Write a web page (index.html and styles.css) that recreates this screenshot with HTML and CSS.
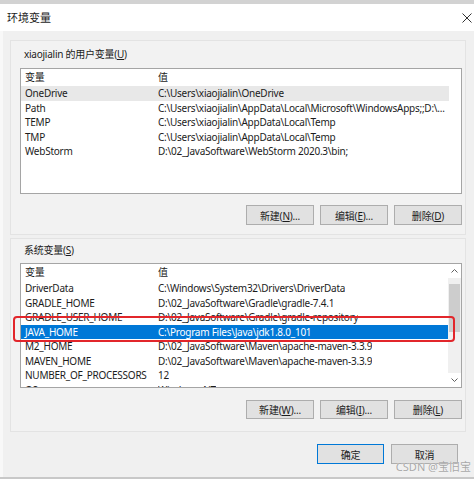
FILE: index.html
```html
<!DOCTYPE html>
<html lang="zh-CN">
<head>
    <meta charset="UTF-8">
    <meta name="viewport" content="width=device-width, initial-scale=1.0">
    <title>环境变量</title>
    <link rel="stylesheet" href="styles.css">
</head>
<body>
    <div class="window">
        <div class="edge-top"></div>

        <div class="titlebar">
            <span class="title">环境变量</span>
            <svg class="close" width="10" height="10" viewBox="0 0 10 10">
                <path d="M0.5 0.5 L9.5 9.5 M9.5 0.5 L0.5 9.5" stroke="#333" stroke-width="1" fill="none"/>
            </svg>
        </div>

        <div class="dialog">
            <!-- user variables -->
            <section class="group group-user">
                <div class="group-label">xiaojialin 的用户变量(<u>U</u>)</div>
                <div class="listbox">
                    <div class="rows">
                        <div class="row head"><span class="col-name">变量</span><span class="col-val">值</span></div>
                        <div class="row inactive"><span class="col-name">OneDrive</span><span class="col-val">C:\Users\xiaojialin\OneDrive</span></div>
                        <div class="row"><span class="col-name">Path</span><span class="col-val">C:\Users\xiaojialin\AppData\Local\Microsoft\WindowsApps;;D:\...</span></div>
                        <div class="row"><span class="col-name">TEMP</span><span class="col-val">C:\Users\xiaojialin\AppData\Local\Temp</span></div>
                        <div class="row"><span class="col-name">TMP</span><span class="col-val">C:\Users\xiaojialin\AppData\Local\Temp</span></div>
                        <div class="row"><span class="col-name">WebStorm</span><span class="col-val">D:\02_JavaSoftware\WebStorm 2020.3\bin;</span></div>
                    </div>
                </div>
                <div class="actions">
                    <button class="btn">新建(<u>N</u>)...</button>
                    <button class="btn">编辑(<u>E</u>)...</button>
                    <button class="btn">删除(<u>D</u>)</button>
                </div>
            </section>

            <!-- system variables -->
            <section class="group group-system">
                <div class="group-label">系统变量(<u>S</u>)</div>
                <div class="listbox">
                    <div class="rows">
                        <div class="row head"><span class="col-name">变量</span><span class="col-val">值</span></div>
                        <div class="row"><span class="col-name">DriverData</span><span class="col-val">C:\Windows\System32\Drivers\DriverData</span></div>
                        <div class="row"><span class="col-name">GRADLE_HOME</span><span class="col-val">D:\02_JavaSoftware\Gradle\gradle-7.4.1</span></div>
                        <div class="row"><span class="col-name">GRADLE_USER_HOME</span><span class="col-val">D:\02_JavaSoftware\Gradle\gradle-repository</span></div>
                        <div class="row selected"><span class="col-name">JAVA_HOME</span><span class="col-val">C:\Program Files\Java\jdk1.8.0_101</span></div>
                        <div class="row"><span class="col-name">M2_HOME</span><span class="col-val">D:\02_JavaSoftware\Maven\apache-maven-3.3.9</span></div>
                        <div class="row"><span class="col-name">MAVEN_HOME</span><span class="col-val">D:\02_JavaSoftware\Maven\apache-maven-3.3.9</span></div>
                        <div class="row"><span class="col-name">NUMBER_OF_PROCESSORS</span><span class="col-val">12</span></div>
                        <div class="row"><span class="col-name">OS</span><span class="col-val">Windows_NT</span></div>
                    </div>
                    <div class="scrollbar">
                        <svg class="arrow" width="7" height="4" viewBox="0 0 7 4"><path d="M0.5 3.5 L3.5 0.5 L6.5 3.5" stroke="#606060" fill="none"/></svg>
                        <div class="track"><div class="thumb"></div></div>
                        <svg class="arrow" width="7" height="4" viewBox="0 0 7 4"><path d="M0.5 0.5 L3.5 3.5 L6.5 0.5" stroke="#606060" fill="none"/></svg>
                    </div>
                </div>
                <div class="actions">
                    <button class="btn">新建(<u>W</u>)...</button>
                    <button class="btn">编辑(<u>I</u>)...</button>
                    <button class="btn">删除(<u>L</u>)</button>
                </div>
                <div class="highlight"></div>
            </section>

            <div class="dialog-buttons">
                <button class="btn default">确定</button>
                <button class="btn">取消</button>
            </div>
        </div>

        <div class="edge-bottom"></div>
        <div class="watermark">CSDN @宝旧宝</div>
    </div>
</body>
</html>
```

FILE: styles.css
```css
body {
    margin: 0;
    font-family: "Noto Sans", "Noto Sans CJK SC", sans-serif;
    font-size: 10px;
    letter-spacing: -0.25px;
    color: #1c1c1c;
    background: #f0f0f0;
}

.window {
    position: relative;
    width: 474px;
    height: 479px;
    display: flex;
    flex-direction: column;
    overflow: hidden;
}

.edge-top {
    height: 4px;
    background: #d2d2d2;
}

.titlebar {
    height: 27px;
    background: #ffffff;
    display: flex;
    align-items: center;
    justify-content: space-between;
    padding: 0 2px 0 7px;
}

.title {
    font-family: "Noto Sans CJK SC", sans-serif;
    font-size: 11px;
    letter-spacing: 0;
    margin-top: -1px;
}

.dialog {
    flex: 1;
    position: relative;
    background: #f0f0f0;
    border-left: 3px solid #f8f8f8;
    padding: 9px 8px 0 7px;
}

.group {
    position: relative;
    border: 1px solid #e3e3e3;
    background: #f2f2f2;
    padding: 5px 3px 9px 9px;
}

.group-system {
    margin-top: 3px;
    padding-top: 3px;
    padding-bottom: 12px;
}

.group-label {
    line-height: 17px;
    padding-left: 4px;
}

.group-system .group-label {
    line-height: 16px;
}

.listbox {
    margin-top: 5px;
    height: 124px;
    border: 1px solid #a5a5a5;
    background: #ffffff;
    display: flex;
    overflow: hidden;
}

.group-system .listbox {
    height: 123px;
}

.rows {
    width: 428px;
}

.row {
    display: flex;
    height: 14.5px;
    line-height: 14.5px;
    white-space: nowrap;
}

.row.head {
    height: 17px;
    line-height: 17px;
}

.row.inactive {
    background: #e8e8e8;
}

.row.selected {
    background: #0078d7;
    color: #ffffff;
}

.col-name {
    width: 133px;
    padding-left: 4px;
    flex: none;
}

.col-val {
    overflow: hidden;
}

.scrollbar {
    width: 13px;
    display: flex;
    flex-direction: column;
    align-items: center;
    background: #ffffff;
}

.arrow {
    margin: 5px 0;
}

.track {
    flex: 1;
    width: 100%;
    background: #f0f0f0;
}

.thumb {
    margin: 6px 1px 0 1px;
    height: 48px;
    background: #cdcdcd;
}

.actions {
    display: flex;
    justify-content: flex-end;
    gap: 6px;
    margin-top: 11px;
}

.group-system .actions {
    margin-top: 12px;
}

.btn {
    width: 68px;
    height: 20px;
    padding: 0;
    border: 1px solid #adadad;
    background: #e1e1e1;
    font-family: "Noto Sans", "Noto Sans CJK SC", sans-serif;
    font-size: 10px;
    letter-spacing: -0.2px;
    color: #1c1c1c;
}

.group-system .btn {
    height: 19px;
}

.highlight {
    position: absolute;
    left: 2px;
    top: 77px;
    width: 438px;
    height: 22px;
    border: 2px solid #e2262b;
    border-radius: 4px;
}

.dialog-buttons {
    display: flex;
    justify-content: flex-end;
    gap: 7px;
    margin-top: 12px;
    padding-right: 8px;
}

.dialog-buttons .btn {
    width: 67px;
}

.btn.default {
    border-color: #0078d7;
}

.edge-bottom {
    height: 2px;
    background: #c8c8c8;
}

.watermark {
    position: absolute;
    right: 3px;
    bottom: 5px;
    font-size: 11px;
    letter-spacing: 0;
    color: #a8a8a8;
    text-shadow: 0 0 1px #ffffff;
}
```
